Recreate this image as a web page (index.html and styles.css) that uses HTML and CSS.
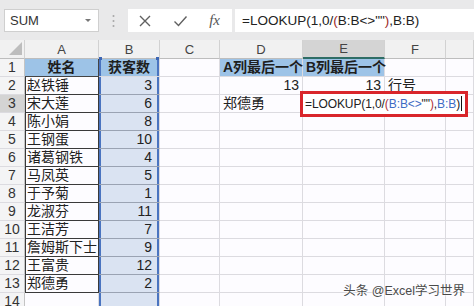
FILE: index.html
```html
<!DOCTYPE html>
<html lang="zh-CN">
  <head>
    <meta charset="UTF-8" />
    <title>LOOKUP 最后一个</title>
    <link rel="stylesheet" href="styles.css">
  </head>
  <body>
    <div class="toolbar">
      <div class="namebox"><span>SUM</span><span class="caret"></span></div>
      <div class="grip">
        <svg width="3" height="14" viewBox="0 0 3 14"><circle cx="1.5" cy="2" r="1" /><circle cx="1.5" cy="7" r="1" /><circle cx="1.5" cy="12" r="1" /></svg>
      </div>
      <div class="fxbtns">
        <svg width="14" height="14" viewBox="0 0 14 14"><path d="M2 2 L12 12 M12 2 L2 12" /></svg>
        <svg width="15" height="14" viewBox="0 0 15 14"><path d="M1.5 7.5 L5.5 11.5 L13.5 2.5" /></svg>
        <span class="fx">fx</span>
      </div>
      <div class="formula">=LOOKUP(1,0/<span class="paren">(</span>B:B&lt;&gt;""<span class="paren">)</span>,B:B)</div>
    </div>

    <table class="sheet">
      <colgroup>
        <col style="width:25px"><col style="width:74px"><col style="width:61px"><col style="width:60px">
        <col style="width:83px"><col style="width:82px"><col style="width:61px"><col style="width:28px">
      </colgroup>
      <tr class="colhead">
        <th class="corner"><span class="tri"></span></th>
        <th>A</th><th>B</th><th>C</th><th>D</th><th class="sel">E</th><th>F</th><th></th>
      </tr>
      <tr>
        <td class="rh">1</td>
        <td class="hd center a1">姓名</td>
        <td class="hd center b1">获客数<span class="handle hl"></span><span class="handle hr"></span></td>
        <td></td>
        <td class="hd">A列最后一个</td>
        <td class="hd">B列最后一个</td>
        <td></td><td></td>
      </tr>
      <tr>
        <td class="rh">2</td><td class="acol">赵铁锤</td><td class="bcol">3</td><td></td>
        <td class="num">13</td><td class="num">13</td><td>行号</td><td></td>
      </tr>
      <tr>
        <td class="rh rsel">3</td><td class="acol">宋大莲</td><td class="bcol">6</td><td></td>
        <td>郑德勇</td>
        <td class="editcell">
          <div class="edit"><span>=LOOKUP(1,0/</span><span class="paren">(</span><span class="ref">B:B&lt;&gt;</span><span>""</span><span class="paren">)</span><span>,</span><span class="ref">B:B</span><span>)</span><span class="cursor"></span></div>
        </td>
        <td></td><td></td>
      </tr>
      <tr><td class="rh">4</td><td class="acol">陈小娟</td><td class="bcol">8</td><td></td><td></td><td></td><td></td><td></td></tr>
      <tr><td class="rh">5</td><td class="acol">王钢蛋</td><td class="bcol">10</td><td></td><td></td><td></td><td></td><td></td></tr>
      <tr><td class="rh">6</td><td class="acol">诸葛钢铁</td><td class="bcol">4</td><td></td><td></td><td></td><td></td><td></td></tr>
      <tr><td class="rh">7</td><td class="acol">马凤英</td><td class="bcol">5</td><td></td><td></td><td></td><td></td><td></td></tr>
      <tr><td class="rh">8</td><td class="acol">于予菊</td><td class="bcol">1</td><td></td><td></td><td></td><td></td><td></td></tr>
      <tr><td class="rh">9</td><td class="acol">龙淑芬</td><td class="bcol">11</td><td></td><td></td><td></td><td></td><td></td></tr>
      <tr><td class="rh">10</td><td class="acol">王洁芳</td><td class="bcol">7</td><td></td><td></td><td></td><td></td><td></td></tr>
      <tr><td class="rh">11</td><td class="acol">詹姆斯下士</td><td class="bcol">9</td><td></td><td></td><td></td><td></td><td></td></tr>
      <tr><td class="rh">12</td><td class="acol">王富贵</td><td class="bcol">12</td><td></td><td></td><td></td><td></td><td></td></tr>
      <tr><td class="rh">13</td><td class="acol">郑德勇</td><td class="bcol">2</td><td></td><td></td><td></td><td></td><td></td></tr>
      <tr><td class="rh">14</td><td></td><td class="bcol"></td><td></td><td></td><td></td><td></td><td></td></tr>
    </table>

    <div class="watermark">头条 @Excel学习世界</div>
  </body>
</html>
```

FILE: styles.css
```css
body {
  margin: 0;
  width: 474px;
  height: 306px;
  overflow: hidden;
  position: relative;
  background-color: #fdfcff;
  font-family: "Liberation Sans", "Noto Sans CJK SC", sans-serif;
  color: #222;
}
.toolbar {
  height: 40px;
  box-sizing: border-box;
  padding-top: 9px;
  display: flex;
  align-items: flex-start;
  background-color: #e9e9ea;
}
.namebox {
  margin-left: 4px;
  width: 95px;
  height: 23px;
  box-sizing: border-box;
  padding: 0 7px 0 5px;
  display: flex;
  align-items: center;
  justify-content: space-between;
  background-color: #fff;
  border: 1px solid #cfcfcf;
  font-size: 13px;
  color: #333;
}
.caret {
  width: 0;
  height: 0;
  border-left: 3px solid transparent;
  border-right: 3px solid transparent;
  border-top: 3px solid #777;
}
.grip {
  width: 29px;
  height: 23px;
  display: flex;
  align-items: center;
  justify-content: center;
}
.grip svg {
  fill: #a6a6a6;
}
.fxbtns {
  width: 104px;
  height: 23px;
  box-sizing: border-box;
  padding: 0 12px 0 10px;
  display: flex;
  align-items: center;
  justify-content: space-between;
  background-color: #fff;
}
.fxbtns svg {
  fill: none;
  stroke: #606060;
  stroke-width: 1.4;
}
.fx {
  font-family: "Liberation Serif", serif;
  font-style: italic;
  font-size: 15px;
  color: #555;
}
.formula {
  margin-left: 3px;
  flex: 1;
  height: 23px;
  padding-left: 7px;
  background-color: #fff;
  font-size: 13.5px;
  line-height: 23px;
  color: #222;
}
.formula .paren {
  color: #9c2a2a;
}
.sheet {
  table-layout: fixed;
  width: 474px;
  border-collapse: separate;
  border-spacing: 0;
}
.sheet th,
.sheet td {
  height: 17px;
  padding: 0 3px;
  line-height: 17px;
  white-space: nowrap;
  border-right: 1px solid #dcdbe0;
  border-bottom: 1px solid #dcdbe0;
  font-size: 14px;
  text-align: left;
  overflow: visible;
}
.colhead th {
  background-color: #f1f1f1;
  color: #444;
  font-weight: normal;
  font-size: 13px;
  text-align: center;
  border-right: 1px solid #d2d2d2;
  border-bottom: 1px solid #bdbdbd;
}
.colhead th.sel {
  background-color: #d4d4d4;
  border-bottom: 2px solid #2e6d66;
  height: 16px;
}
.corner {
  position: relative;
}
.tri {
  position: absolute;
  right: 2px;
  bottom: 3px;
  width: 13px;
  height: 13px;
  background-color: #bdbdbd;
  clip-path: polygon(100% 0, 100% 100%, 0 100%);
}
.rh {
  text-align: center !important;
  background-color: #f4f4f5;
  color: #333;
  border-right: 1px solid #c4c4c4 !important;
  padding: 0 !important;
}
.rh.rsel {
  background-color: #d4d4d4;
}
.hd {
  background-color: #9dc3e7;
  font-weight: bold;
  color: #1e1e1e;
}
.center {
  text-align: center !important;
}
.a1 {
  border-bottom: 1px solid #444 !important;
  border-right: 1px solid #444 !important;
}
.acol {
  border-right: 1px solid #3a3a3a !important;
  border-bottom: 1px solid #3a3a3a !important;
  box-shadow: inset 1px 0 #3a3a3a;
  padding-left: 2px !important;
}
.b1,
.bcol {
  box-shadow: inset 2px 0 #4a74c0, inset -2px 0 #4a74c0;
}
.b1 {
  position: relative;
}
.bcol {
  background-color: #dae3f2;
  text-align: right !important;
  padding-right: 7px !important;
  border-bottom: 1px solid #9aa3b3 !important;
}
.handle {
  position: absolute;
  top: -2px;
  width: 3px;
  height: 3px;
  background-color: #3c66b4;
}
.hl {
  left: 0;
}
.hr {
  right: 0;
}
.num {
  text-align: right !important;
}
.editcell {
  position: relative;
}
.edit {
  position: absolute;
  left: -3px;
  top: -4px;
  width: 168px;
  height: 26px;
  box-sizing: border-box;
  padding-left: 2px;
  border: 3px solid #d9262b;
  background-color: #fff;
  font-size: 12px;
  line-height: 20px;
  letter-spacing: -0.1px;
  color: #222;
  white-space: nowrap;
  overflow: hidden;
}
.edit .paren {
  color: #b0303a;
}
.edit .ref {
  color: #3d6cc4;
}
.cursor {
  display: inline-block;
  width: 1px;
  height: 15px;
  margin-left: 1px;
  vertical-align: -3px;
  background-color: #111;
}
.watermark {
  position: absolute;
  right: 9px;
  bottom: 7px;
  font-size: 12.5px;
  color: #4a4a4a;
  text-shadow: 0 0 2px #fff, 0 0 2px #fff, 0 0 1px #fff;
}
```
